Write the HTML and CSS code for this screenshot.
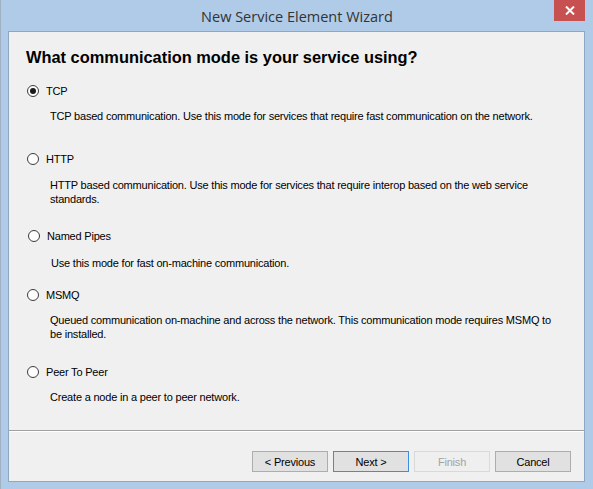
FILE: index.html
```html
<!DOCTYPE html>
<html>
<head>
<meta charset="utf-8">
<title>New Service Element Wizard</title>
<link rel="stylesheet" href="styles.css">
</head>
<body>
<div class="window">
  <div class="titlebar">
    <span class="title">New Service Element Wizard</span>
    <div class="close"><svg width="10" height="9" viewBox="0 0 10 9"><path d="M1 0.5 L9 8.5 M9 0.5 L1 8.5" stroke="#fff" stroke-width="2" fill="none"/></svg></div>
  </div>
  <div class="client">
    <div class="page">
      <h1 class="heading">What communication mode is your service using?</h1>
      <div class="option opt-tcp">
        <div class="radio-row"><span class="radio checked"></span><span class="radio-label">TCP</span></div>
        <p class="desc">TCP based communication. Use this mode for services that require fast communication on the network.</p>
      </div>
      <div class="option opt-http">
        <div class="radio-row"><span class="radio"></span><span class="radio-label">HTTP</span></div>
        <p class="desc">HTTP based communication. Use this mode for services that require interop based on the web service<br>standards.</p>
      </div>
      <div class="option opt-pipes">
        <div class="radio-row shifted"><span class="radio"></span><span class="radio-label">Named Pipes</span></div>
        <p class="desc shifted">Use this mode for fast on-machine communication.</p>
      </div>
      <div class="option opt-msmq">
        <div class="radio-row"><span class="radio"></span><span class="radio-label">MSMQ</span></div>
        <p class="desc">Queued communication on-machine and across the network. This communication mode requires MSMQ to<br>be installed.</p>
      </div>
      <div class="option opt-peer">
        <div class="radio-row"><span class="radio"></span><span class="radio-label">Peer To Peer</span></div>
        <p class="desc">Create a node in a peer to peer network.</p>
      </div>
    </div>
    <div class="footer">
      <div class="separator"></div>
      <div class="buttons">
        <button class="btn">&lt; Previous</button>
        <button class="btn default">Next &gt;</button>
        <button class="btn disabled">Finish</button>
        <button class="btn">Cancel</button>
      </div>
    </div>
  </div>
</div>
</body>
</html>
```
FILE: styles.css
```css
html, body {
  margin: 0;
  padding: 0;
}
body {
  background: #afcbe8;
  font-family: "Liberation Sans", Arial, sans-serif;
  color: #000;
}
.window {
  position: relative;
  width: 593px;
  height: 489px;
  box-sizing: border-box;
  background: #afcbe8;
  border-left: 1px solid #9fb0c2;
  display: flex;
  flex-direction: column;
}
.titlebar {
  height: 31px;
  flex: none;
  display: flex;
  align-items: center;
  justify-content: center;
}
.title {
  font-family: "Open Sans", "Noto Sans", sans-serif;
  font-size: 14.5px;
  color: #333;
  margin-top: 1px;
}
.close {
  position: absolute;
  top: 0;
  right: 8px;
  width: 31px;
  height: 21px;
  background: #c75050;
  display: flex;
  align-items: center;
  justify-content: center;
}
.close svg {
  display: block;
}
.client {
  flex: 1;
  margin: 0 8px 7px 7px;
  border: 1px solid #8ea7c2;
  background: #f0f0f0;
  display: flex;
  flex-direction: column;
  min-height: 0;
}
.page {
  flex: 1;
  padding-left: 17px;
}
.heading {
  margin: 0;
  padding-top: 15px;
  font-size: 16.4px;
  line-height: 20px;
  font-weight: bold;
}
.option {
  display: flex;
  flex-direction: column;
}
.opt-tcp { margin-top: 16px; }
.opt-http { margin-top: 28px; }
.opt-pipes { margin-top: 22px; }
.opt-msmq { margin-top: 17px; }
.opt-peer { margin-top: 23px; }
.radio-row {
  display: flex;
  align-items: center;
  height: 16px;
  margin-left: 1px;
}
.radio-row.shifted {
  margin-left: 2px;
}
.radio {
  width: 12px;
  height: 12px;
  box-sizing: border-box;
  border: 1px solid #3c3c3c;
  border-radius: 50%;
  background: #fdfdfd;
  display: flex;
  align-items: center;
  justify-content: center;
  flex: none;
}
.radio.checked::after {
  content: "";
  width: 6px;
  height: 6px;
  border-radius: 50%;
  background: #1a1a1a;
}
.radio-label {
  margin-left: 7px;
  font-size: 11px;
  line-height: 14px;
  letter-spacing: -0.2px;
}
.desc {
  margin: 10px 0 0 24px;
  font-size: 11px;
  line-height: 14px;
  letter-spacing: -0.2px;
}
.opt-http .desc { margin-top: 11px; }
.opt-pipes .desc { margin-top: 12px; }
.desc.shifted {
  margin-left: 25px;
}
.footer {
  flex: none;
}
.separator {
  height: 1px;
  background: #a0a0a0;
  border-bottom: 1px solid #ffffff;
}
.buttons {
  display: flex;
  justify-content: flex-end;
  gap: 5px;
  padding: 19px 13px 9px 0;
}
.btn {
  width: 76px;
  height: 21px;
  box-sizing: border-box;
  margin: 0;
  padding: 0;
  border: 1px solid #adadad;
  background: #e1e1e1;
  font-family: "Liberation Sans", Arial, sans-serif;
  font-size: 11px;
  letter-spacing: -0.2px;
  color: #000;
}
.btn.default {
  border-color: #3c8fe0;
}
.btn.disabled {
  border-color: #d9d9d9;
  background: #efefef;
  color: #a3a3a3;
}
```
